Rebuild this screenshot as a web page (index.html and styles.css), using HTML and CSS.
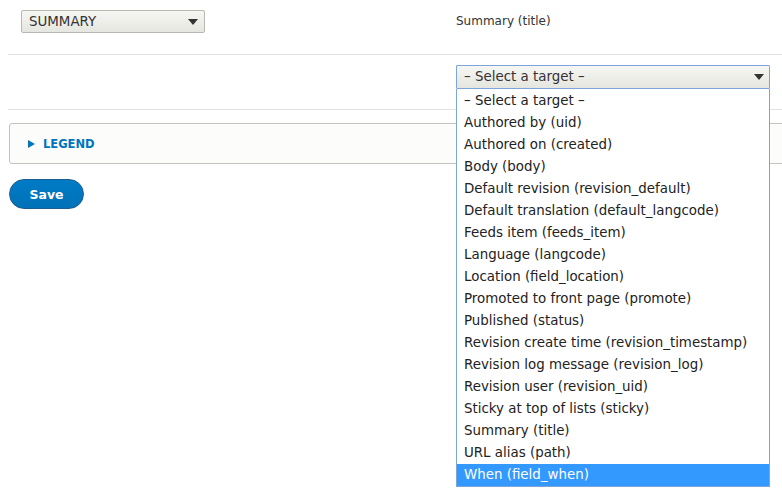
FILE: index.html
```html
<!DOCTYPE html>
<html>
<head>
<meta charset="utf-8">
<link rel="stylesheet" href="styles.css">
</head>
<body>
<div class="page">
  <div class="row row-first">
    <div class="cell-left">
      <div class="select select-source"><span>SUMMARY</span><span class="arrow"></span></div>
    </div>
    <div class="cell-right"><span class="target-text">Summary (title)</span></div>
  </div>
  <div class="row row-second">
    <div class="cell-left"></div>
    <div class="cell-right">
      <div class="select select-target"><span>– Select a target –</span><span class="arrow"></span></div>
      <ul class="listbox">
        <li>– Select a target –</li>
        <li>Authored by (uid)</li>
        <li>Authored on (created)</li>
        <li>Body (body)</li>
        <li>Default revision (revision_default)</li>
        <li>Default translation (default_langcode)</li>
        <li>Feeds item (feeds_item)</li>
        <li>Language (langcode)</li>
        <li>Location (field_location)</li>
        <li>Promoted to front page (promote)</li>
        <li>Published (status)</li>
        <li>Revision create time (revision_timestamp)</li>
        <li>Revision log message (revision_log)</li>
        <li>Revision user (revision_uid)</li>
        <li>Sticky at top of lists (sticky)</li>
        <li>Summary (title)</li>
        <li>URL alias (path)</li>
        <li class="selected">When (field_when)</li>
      </ul>
    </div>
  </div>
  <div class="legend-box">
    <span class="legend-toggle"><span class="tri"></span>LEGEND</span>
  </div>
  <div class="actions">
    <button class="btn-save">Save</button>
  </div>
</div>
</body>
</html>
```

FILE: styles.css
```css
html {
  overflow: hidden;
  height: 100%;
}
body {
  margin: 0;
  padding: 0;
  background: #fff;
  min-height: 100%;
  font-family: "DejaVu Sans", Verdana, sans-serif;
  font-size: 12px;
  color: #222;
}
.page {
  padding-left: 8px;
  width: 800px;
}
.row {
  display: grid;
  grid-template-columns: 448px 1fr;
  border-bottom: 1px solid #e2e2df;
}
.row-first {
  height: 54px;
}
.row-second {
  height: 54px;
}
.cell-left {
  padding-left: 13px;
  padding-top: 10px;
}
.cell-right {
  position: relative;
}
.row-first .cell-right {
  padding-top: 14px;
}
.row-second .cell-left,
.row-second .cell-right {
  padding-top: 10px;
}
.target-text {
  font-size: 12px;
  color: #333;
}
.select {
  box-sizing: border-box;
  height: 23px;
  display: flex;
  align-items: center;
  justify-content: space-between;
  border: 1px solid #b8b8b2;
  border-radius: 2px;
  background: linear-gradient(#f6f6f3, #e6e6e0);
  color: #333;
  font-size: 13.4px;
}
.select-source {
  width: 184px;
  padding: 0 6px 0 7px;
}
.select-target {
  width: 314px;
  height: 24px;
  padding: 0 5px 0 7px;
  border-color: #7ea4dc;
  border-radius: 1px;
}
.select-target span:first-child {
  margin-top: -1px;
}
.arrow {
  width: 0;
  height: 0;
  border-left: 5px solid transparent;
  border-right: 5px solid transparent;
  border-top: 6px solid #333;
}
.listbox {
  position: absolute;
  left: 0;
  top: 34px;
  box-sizing: border-box;
  width: 314px;
  margin: 0;
  padding: 1px 0 0;
  list-style: none;
  background: #fff;
  border: 1px solid #7ea4dc;
  border-top: none;
  z-index: 5;
  font-size: 13.4px;
  color: #222;
}
.listbox li {
  height: 22px;
  line-height: 22px;
  padding-left: 7px;
  white-space: nowrap;
}
.listbox li.selected {
  background: #3399ff;
  color: #fff;
}
.legend-box {
  box-sizing: border-box;
  margin: 13px 0 0 1px;
  height: 41px;
  border: 1px solid #c4c4bf;
  border-radius: 3px;
  background: #fcfcfa;
  display: flex;
  align-items: center;
  padding-left: 18px;
}
.legend-toggle {
  display: flex;
  align-items: center;
  color: #0074bd;
  font-weight: bold;
  font-size: 11.5px;
}
.tri {
  width: 0;
  height: 0;
  border-top: 4px solid transparent;
  border-bottom: 4px solid transparent;
  border-left: 7px solid #0074bd;
  margin-right: 8px;
}
.actions {
  padding: 15px 0 0 1px;
}
.btn-save {
  width: 75px;
  height: 30px;
  border: 1px solid #1e5c90;
  border-radius: 15px;
  background: linear-gradient(#007bc6, #0071b8);
  color: #fff;
  font-family: "DejaVu Sans", Verdana, sans-serif;
  font-weight: bold;
  font-size: 12.5px;
  padding: 0;
}
```
